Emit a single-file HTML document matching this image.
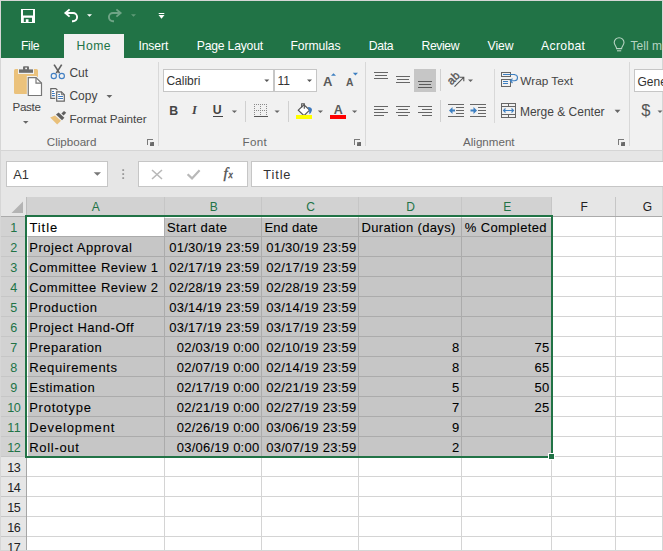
<!DOCTYPE html>
<html><head><meta charset="utf-8"><style>
html,body{margin:0;padding:0;}
body{width:663px;height:551px;position:relative;overflow:hidden;background:#fff;font-family:"Liberation Sans",sans-serif;}
svg{position:absolute;left:0;top:0;}
.t{position:absolute;white-space:pre;line-height:40px;height:40px;}
</style></head><body>
<svg width="663" height="551" viewBox="0 0 663 551">
<rect x="0" y="0" width="663" height="551" fill="#d6d6d6" />
<rect x="1" y="1" width="661" height="549" fill="#ffffff" />
<rect x="1" y="1" width="661" height="57" fill="#217346" />
<rect x="1" y="58" width="661" height="92" fill="#f1f1f1" />
<rect x="1" y="150" width="661" height="1" fill="#d5d5d5" />
<rect x="64" y="34" width="60" height="24" fill="#f1f1f1" />
<rect x="1" y="151" width="661" height="46" fill="#e6e6e6" />
<path fill="#fff" fill-rule="evenodd" d="M21 9 H35 V23 H21 Z M23 10 V15.6 H33 V10 Z M23.8 17.8 V22 H25.8 V19.2 H28.5 V22 H32 V17.8 Z"/>
<path d="M69.6 9.4 L65.4 13 L69.6 16.6 M65.5 13 H73 A4.1 4.1 0 0 1 73 21.2 H72" fill="none" stroke="#fff" stroke-width="1.9"/>
<path d="M87 14.2 H92 L89.5 16.8 Z" fill="#fff"/>
<path d="M116.4 9.4 L120.6 13 L116.4 16.6 M120.5 13 H113 A4.1 4.1 0 0 0 113 21.2 H114" fill="none" stroke="#6fa486" stroke-width="1.9"/>
<path d="M131 14.2 H136 L133.5 16.8 Z" fill="#5e9a77"/>
<rect x="158.7" y="13" width="5.6" height="1" fill="#fff"/><path d="M158.5 15 H164.5 L161.5 18.7 Z" fill="#fff"/>
<text x="20.90" y="50.30" font-family="Liberation Sans" font-size="12.2" font-weight="normal" fill="#fff" text-anchor="start" textLength="18.70" lengthAdjust="spacing">File</text>
<text x="76.60" y="50.30" font-family="Liberation Sans" font-size="12.2" font-weight="normal" fill="#217346" text-anchor="start" textLength="34.00" lengthAdjust="spacing">Home</text>
<text x="138.40" y="50.30" font-family="Liberation Sans" font-size="12.2" font-weight="normal" fill="#fff" text-anchor="start" textLength="29.90" lengthAdjust="spacing">Insert</text>
<text x="196.80" y="50.30" font-family="Liberation Sans" font-size="12.2" font-weight="normal" fill="#fff" text-anchor="start" textLength="66.30" lengthAdjust="spacing">Page Layout</text>
<text x="290.50" y="50.30" font-family="Liberation Sans" font-size="12.2" font-weight="normal" fill="#fff" text-anchor="start" textLength="50.10" lengthAdjust="spacing">Formulas</text>
<text x="368.70" y="50.30" font-family="Liberation Sans" font-size="12.2" font-weight="normal" fill="#fff" text-anchor="start" textLength="24.80" lengthAdjust="spacing">Data</text>
<text x="421.60" y="50.30" font-family="Liberation Sans" font-size="12.2" font-weight="normal" fill="#fff" text-anchor="start" textLength="37.90" lengthAdjust="spacing">Review</text>
<text x="487.60" y="50.30" font-family="Liberation Sans" font-size="12.2" font-weight="normal" fill="#fff" text-anchor="start" textLength="26.00" lengthAdjust="spacing">View</text>
<text x="541.10" y="50.30" font-family="Liberation Sans" font-size="12.2" font-weight="normal" fill="#fff" text-anchor="start" textLength="43.90" lengthAdjust="spacing">Acrobat</text>
<g fill="none" stroke="#b7d3c2" stroke-width="1.1"><path d="M616.6 48.6 C616.6 46.4 614.2 45 614.2 42.6 A4.9 4.9 0 0 1 624 42.6 C624 45 621.6 46.4 621.6 48.6 Z"/><path d="M617 50.8 H621.2"/></g>
<rect x="14" y="69" width="24" height="25" rx="1.5" fill="#ebc27c"/>
<rect x="18" y="68.4" width="16" height="5.6" fill="#f1f1f1"/>
<rect x="19" y="69.4" width="14" height="3.4" fill="#6d6d6d"/><rect x="23" y="66.2" width="6" height="4" rx="1" fill="#6d6d6d"/><rect x="25.3" y="67.6" width="1.6" height="1.6" fill="#fff"/>
<path d="M26.8 76.1 H36.5 L43 82.6 V97 H26.8 Z" fill="#f1f1f1"/>
<path d="M28.3 77.6 H36 L41.5 83.1 V95.5 H28.3 Z" fill="#fff" stroke="#777" stroke-width="1.2"/>
<path d="M36 77.6 V83.1 H41.5" fill="none" stroke="#777" stroke-width="1.2"/>
<path d="M23 121 H28.5 L25.75 123.8 Z" fill="#666"/>
<path d="M53.4 65 L54.8 64.2 L60.2 72.8 L58.8 73.6 Z" fill="#606060"/><path d="M62.4 65 L61 64.2 L55.6 72.8 L57 73.6 Z" fill="#606060"/>
<g fill="none" stroke="#4280c4" stroke-width="1.15"><circle cx="53.8" cy="76" r="2.6"/><circle cx="61.8" cy="76" r="2.6"/></g>
<path d="M50.8 88.6 H55.8 L57.2 90 V98.4 H50.8 Z" fill="#fff" stroke="#666" stroke-width="1.2"/>
<path d="M52 91.5 H54 M52 93.5 H54.8 M52 95.6 H54.8" stroke="#3d78bd" stroke-width="1.1"/>
<path d="M56.7 91.8 H61.4 L64.3 94.7 V101.1 H56.7 Z" fill="#fff" stroke="#f1f1f1" stroke-width="3"/>
<path d="M56.7 91.8 H61.4 L64.3 94.7 V101.1 H56.7 Z" fill="#fff" stroke="#666" stroke-width="1.2"/>
<path d="M61.4 91.8 V94.7 H64.3" fill="none" stroke="#666" stroke-width="0.9"/>
<path d="M58.2 94.5 H59.9 M58.2 96.5 H63 M58.2 98.5 H63" stroke="#3d78bd" stroke-width="1.1"/>
<path d="M106.5 95 H112.3 L109.4 97.9 Z" fill="#666"/>
<path d="M50.2 117.4 L55 115.4 L61 120.8 L57.2 124.6 Z" fill="#e9c07a"/>
<path d="M56 114.6 L58.6 112.4 L64.4 117.8 L62 120.2 Z" fill="#5f5f5f"/>
<path d="M61.4 113.6 L64 111 L66.2 112.8 L63.6 115.6 Z" fill="#5f5f5f"/>
<rect x="147" y="139" width="1" height="6" fill="#7a7a7a" />
<rect x="147" y="139" width="6" height="1" fill="#7a7a7a" />
<path d="M151.6 142 H154 V146 H150 V143.6 Z" fill="#6a6a6a"/>
<rect x="150" y="142" width="1" height="1" fill="#8a8a8a" />
<rect x="158" y="62" width="1" height="84" fill="#d8d8d8" />
<rect x="163" y="69" width="111" height="23" fill="#c6c6c6" />
<rect x="164" y="70" width="109" height="21" fill="#fff" />
<rect x="274" y="69" width="43" height="23" fill="#c6c6c6" />
<rect x="275" y="70" width="41" height="21" fill="#fff" />
<path d="M264.3 79.5 H269.3 L266.8 82 Z" fill="#555"/>
<path d="M307 79.5 H312 L309.5 82 Z" fill="#555"/>
<text x="323" y="85.5" font-family="Liberation Sans" font-weight="bold" font-size="13" fill="#5a5a5a">A</text>
<path d="M331 75.7 L333.5 73.2 L336 75.7 Z" fill="#3d7fc1"/>
<text x="346" y="85.5" font-family="Liberation Sans" font-weight="bold" font-size="10.3" fill="#5a5a5a">A</text>
<path d="M352.8 72.8 L358 72.8 L355.4 75.6 Z" fill="#3d7fc1"/>
<rect x="213" y="116" width="10" height="1" fill="#444" />
<path d="M231.8 110.5 H237 L234.4 113.1 Z" fill="#666"/>
<rect x="245" y="101" width="1" height="21" fill="#d0d0d0" />
<g fill="none" stroke="#8a8a8a" stroke-width="1" stroke-dasharray="1 1"><path d="M254 104.5 H267 M254.5 104 V116 M266.5 104 V116 M260.5 104 V116 M254 110.5 H267"/></g>
<rect x="254" y="116" width="14" height="1" fill="#555" />
<path d="M274.5 110.5 H279.7 L277.1 113.1 Z" fill="#666"/>
<rect x="288" y="101" width="1" height="21" fill="#d0d0d0" />
<path d="M298.3 110.2 L303.9 104.8 L309.6 110.1 L304 115.6 Z" fill="#fff" stroke="#555" stroke-width="1.15"/>
<path d="M301.7 107.4 V103.7 H304.3 V108.8" fill="none" stroke="#555" stroke-width="1.15"/>
<path d="M307.8 107 Q312.6 107.4 311.9 110.6 Q311.2 113.2 309.4 114.3 Q309.8 110.2 307.8 107 Z" fill="#3d78bd"/>
<rect x="296" y="115" width="16" height="4" fill="#ffff00" />
<path d="M317.8 110.5 H323 L320.4 113.1 Z" fill="#666"/>
<text x="333.8" y="114.3" font-family="Liberation Sans" font-weight="bold" font-size="12.5" fill="#5a5a5a">A</text>
<rect x="330" y="115" width="16" height="4" fill="#ff0000" />
<path d="M352 110.5 H357.2 L354.6 113.1 Z" fill="#666"/>
<rect x="354" y="139" width="1" height="6" fill="#7a7a7a" />
<rect x="354" y="139" width="6" height="1" fill="#7a7a7a" />
<path d="M358.6 142 H361 V146 H357 V143.6 Z" fill="#6a6a6a"/>
<rect x="357" y="142" width="1" height="1" fill="#8a8a8a" />
<rect x="365" y="62" width="1" height="84" fill="#d8d8d8" />
<rect x="374" y="72" width="14" height="1" fill="#666" />
<rect x="374" y="78" width="14" height="1" fill="#666" />
<rect x="375" y="75" width="12" height="1" fill="#666" />
<rect x="396" y="76" width="14" height="1" fill="#666" />
<rect x="396" y="82" width="14" height="1" fill="#666" />
<rect x="397" y="79" width="12" height="1" fill="#666" />
<rect x="414" y="69" width="22" height="23" fill="#c6c6c6" />
<rect x="418" y="81" width="14" height="1" fill="#5a5a5a" />
<rect x="418" y="87" width="14" height="1" fill="#5a5a5a" />
<rect x="419" y="84" width="12" height="1" fill="#5a5a5a" />
<rect x="440" y="69" width="1" height="22" fill="#d0d0d0" />
<g transform="translate(453.4,77.6) rotate(-45)"><text x="-6.8" y="4.2" font-family="Liberation Sans" font-size="11.5" fill="#555" stroke="#555" stroke-width="0.35">ab</text></g>
<path d="M454.5 86.6 L463.5 77.6 M459.8 77.3 H463.8 V81.3" fill="none" stroke="#555" stroke-width="1.1"/>
<path d="M468 79.5 H473 L470.5 82 Z" fill="#666"/>
<rect x="374" y="106" width="14" height="1" fill="#666" />
<rect x="396" y="106" width="14" height="1" fill="#666" />
<rect x="418" y="106" width="14" height="1" fill="#666" />
<rect x="374" y="109" width="10" height="1" fill="#666" />
<rect x="398" y="109" width="10" height="1" fill="#666" />
<rect x="422" y="109" width="10" height="1" fill="#666" />
<rect x="374" y="112" width="14" height="1" fill="#666" />
<rect x="396" y="112" width="14" height="1" fill="#666" />
<rect x="418" y="112" width="14" height="1" fill="#666" />
<rect x="374" y="115" width="10" height="1" fill="#666" />
<rect x="398" y="115" width="10" height="1" fill="#666" />
<rect x="422" y="115" width="10" height="1" fill="#666" />
<rect x="440" y="100" width="1" height="22" fill="#d0d0d0" />
<rect x="448" y="104" width="16" height="1" fill="#666" />
<rect x="470" y="104" width="16" height="1" fill="#666" />
<rect x="456" y="107" width="8" height="1" fill="#666" />
<rect x="478" y="107" width="8" height="1" fill="#666" />
<rect x="456" y="110" width="8" height="1" fill="#666" />
<rect x="478" y="110" width="8" height="1" fill="#666" />
<rect x="456" y="113" width="8" height="1" fill="#666" />
<rect x="478" y="113" width="8" height="1" fill="#666" />
<rect x="448" y="116" width="16" height="1" fill="#666" />
<rect x="470" y="116" width="16" height="1" fill="#666" />
<path d="M449 110.5 L452.5 107 V109.5 H455 V111.5 H452.5 V114 Z" fill="#3d7fc1"/>
<path d="M477 110.5 L473.5 107 V109.5 H470.5 V111.5 H473.5 V114 Z" fill="#3d7fc1"/>
<rect x="494" y="69" width="1" height="54" fill="#d8d8d8" />
<g fill="none" stroke="#666" stroke-width="1"><rect x="501.5" y="72.5" width="9" height="4"/><rect x="501.5" y="79.5" width="9" height="7"/></g>
<path d="M503 74.5 H515 M503 81.5 H508 M503 83.5 H508" stroke="#3d7fc1" stroke-width="1"/>
<path d="M514.5 74.8 A3 3 0 0 1 514.5 80.8 H510.5 M512.5 78.6 L510.3 80.8 L512.5 83" fill="none" stroke="#3d7fc1" stroke-width="1.1"/>
<g fill="none" stroke="#666" stroke-width="1"><rect x="501.5" y="103.5" width="14" height="14"/><path d="M501.5 106.5 H515.5 M501.5 114.5 H515.5 M508.5 103.5 V106.5 M508.5 114.5 V117.5"/></g>
<path d="M503.5 110.5 H513.5 M505.5 108.5 L503.5 110.5 L505.5 112.5 M511.5 108.5 L513.5 110.5 L511.5 112.5" fill="none" stroke="#3d7fc1" stroke-width="1.1"/>
<path d="M614.6 109.8 H620.4 L617.5 112.9 Z" fill="#666"/>
<rect x="618" y="139" width="1" height="6" fill="#7a7a7a" />
<rect x="618" y="139" width="6" height="1" fill="#7a7a7a" />
<path d="M622.6 142 H625 V146 H621 V143.6 Z" fill="#6a6a6a"/>
<rect x="621" y="142" width="1" height="1" fill="#8a8a8a" />
<rect x="629" y="62" width="1" height="84" fill="#d8d8d8" />
<rect x="634" y="69" width="47" height="23" fill="#c6c6c6" />
<rect x="635" y="70" width="45" height="21" fill="#fff" />
<path d="M657.5 110.5 H662.5 L660 113.1 Z" fill="#666"/>
<rect x="6" y="161" width="102" height="26" fill="#c6c6c6" />
<rect x="7" y="162" width="100" height="24" fill="#fff" />
<path d="M93.7 172.2 H101 L97.35 175.7 Z" fill="#777"/>
<rect x="122.3" y="169.2" width="1.8" height="1.8" fill="#999" />
<rect x="122.3" y="173.2" width="1.8" height="1.8" fill="#999" />
<rect x="122.3" y="177.2" width="1.8" height="1.8" fill="#999" />
<rect x="138" y="161" width="110" height="26" fill="#c6c6c6" />
<rect x="139" y="162" width="108" height="24" fill="#fff" />
<path d="M152 170 L162 179 M162 170 L152 179" stroke="#b8b8b8" stroke-width="1.6"/>
<path d="M187.6 174.2 L192 178.4 L199.6 170.2" fill="none" stroke="#b8b8b8" stroke-width="2.2"/>
<text x="223.60" y="177.80" font-family="Liberation Serif" font-size="15" font-weight="normal" font-style="italic" fill="#505050" text-anchor="start" stroke="#505050" stroke-width="0.35">f</text>
<text x="228.60" y="177.80" font-family="Liberation Serif" font-size="9.5" font-weight="normal" font-style="italic" fill="#505050" text-anchor="start" stroke="#505050" stroke-width="0.35">x</text>
<rect x="251" y="161" width="450" height="26" fill="#c6c6c6" />
<rect x="252" y="162" width="448" height="24" fill="#fff" />
<rect x="1" y="197" width="661" height="19" fill="#e6e6e6" />
<rect x="27" y="197" width="524" height="19" fill="#d2d2d2" />
<rect x="1" y="216" width="25" height="334" fill="#e6e6e6" />
<rect x="1" y="217" width="25" height="240" fill="#d2d2d2" />
<path d="M11.5 213 H23 V201.5 Z" fill="#b4b4b4"/>
<rect x="26" y="197" width="1" height="19" fill="#bdbdbd" />
<rect x="164" y="197" width="1" height="19" fill="#c6c6c6" />
<rect x="261" y="197" width="1" height="19" fill="#c6c6c6" />
<rect x="358" y="197" width="1" height="19" fill="#c6c6c6" />
<rect x="461" y="197" width="1" height="19" fill="#c6c6c6" />
<rect x="551" y="197" width="1" height="19" fill="#c6c6c6" />
<rect x="615" y="197" width="1" height="19" fill="#c6c6c6" />
<rect x="1" y="216" width="661" height="1" fill="#ababab" />
<rect x="1" y="236" width="25" height="1" fill="#c6c6c6" />
<rect x="1" y="256" width="25" height="1" fill="#c6c6c6" />
<rect x="1" y="276" width="25" height="1" fill="#c6c6c6" />
<rect x="1" y="296" width="25" height="1" fill="#c6c6c6" />
<rect x="1" y="316" width="25" height="1" fill="#c6c6c6" />
<rect x="1" y="336" width="25" height="1" fill="#c6c6c6" />
<rect x="1" y="356" width="25" height="1" fill="#c6c6c6" />
<rect x="1" y="376" width="25" height="1" fill="#c6c6c6" />
<rect x="1" y="396" width="25" height="1" fill="#c6c6c6" />
<rect x="1" y="416" width="25" height="1" fill="#c6c6c6" />
<rect x="1" y="436" width="25" height="1" fill="#c6c6c6" />
<rect x="1" y="456" width="25" height="1" fill="#c6c6c6" />
<rect x="1" y="476" width="25" height="1" fill="#c6c6c6" />
<rect x="1" y="496" width="25" height="1" fill="#c6c6c6" />
<rect x="1" y="516" width="25" height="1" fill="#c6c6c6" />
<rect x="1" y="536" width="25" height="1" fill="#c6c6c6" />
<rect x="1" y="556" width="25" height="1" fill="#c6c6c6" />
<rect x="26" y="457" width="1" height="93" fill="#a6a6a6" />
<rect x="164" y="217" width="1" height="333" fill="#d4d4d4" />
<rect x="261" y="217" width="1" height="333" fill="#d4d4d4" />
<rect x="358" y="217" width="1" height="333" fill="#d4d4d4" />
<rect x="461" y="217" width="1" height="333" fill="#d4d4d4" />
<rect x="551" y="217" width="1" height="333" fill="#d4d4d4" />
<rect x="615" y="217" width="1" height="333" fill="#d4d4d4" />
<rect x="27" y="236" width="635" height="1" fill="#d4d4d4" />
<rect x="27" y="256" width="635" height="1" fill="#d4d4d4" />
<rect x="27" y="276" width="635" height="1" fill="#d4d4d4" />
<rect x="27" y="296" width="635" height="1" fill="#d4d4d4" />
<rect x="27" y="316" width="635" height="1" fill="#d4d4d4" />
<rect x="27" y="336" width="635" height="1" fill="#d4d4d4" />
<rect x="27" y="356" width="635" height="1" fill="#d4d4d4" />
<rect x="27" y="376" width="635" height="1" fill="#d4d4d4" />
<rect x="27" y="396" width="635" height="1" fill="#d4d4d4" />
<rect x="27" y="416" width="635" height="1" fill="#d4d4d4" />
<rect x="27" y="436" width="635" height="1" fill="#d4d4d4" />
<rect x="27" y="456" width="635" height="1" fill="#d4d4d4" />
<rect x="27" y="476" width="635" height="1" fill="#d4d4d4" />
<rect x="27" y="496" width="635" height="1" fill="#d4d4d4" />
<rect x="27" y="516" width="635" height="1" fill="#d4d4d4" />
<rect x="27" y="536" width="635" height="1" fill="#d4d4d4" />
<rect x="27" y="556" width="635" height="1" fill="#d4d4d4" />
<rect x="28" y="218" width="523" height="238" fill="#c6c6c6" />
<rect x="27" y="217" width="137" height="19" fill="#ffffff" />
<rect x="164" y="218" width="1" height="238" fill="#ababab" />
<rect x="261" y="218" width="1" height="238" fill="#ababab" />
<rect x="358" y="218" width="1" height="238" fill="#ababab" />
<rect x="461" y="218" width="1" height="238" fill="#ababab" />
<rect x="28" y="236" width="523" height="1" fill="#ababab" />
<rect x="28" y="256" width="523" height="1" fill="#ababab" />
<rect x="28" y="276" width="523" height="1" fill="#ababab" />
<rect x="28" y="296" width="523" height="1" fill="#ababab" />
<rect x="28" y="316" width="523" height="1" fill="#ababab" />
<rect x="28" y="336" width="523" height="1" fill="#ababab" />
<rect x="28" y="356" width="523" height="1" fill="#ababab" />
<rect x="28" y="376" width="523" height="1" fill="#ababab" />
<rect x="28" y="396" width="523" height="1" fill="#ababab" />
<rect x="28" y="416" width="523" height="1" fill="#ababab" />
<rect x="28" y="436" width="523" height="1" fill="#ababab" />
<path d="M25 215 H553 V458 H25 Z M27 217 V456 H551 V217 Z" fill="#217346" fill-rule="evenodd"/>
<rect x="548" y="453" width="7" height="7" fill="#fff" />
<rect x="549" y="454" width="5" height="5" fill="#217346" />
<text x="13.70" y="231.80" font-family="Liberation Sans" font-size="12.6" font-weight="normal" fill="#217346" text-anchor="middle">1</text>
<text x="13.70" y="251.80" font-family="Liberation Sans" font-size="12.6" font-weight="normal" fill="#217346" text-anchor="middle">2</text>
<text x="13.70" y="271.80" font-family="Liberation Sans" font-size="12.6" font-weight="normal" fill="#217346" text-anchor="middle">3</text>
<text x="13.70" y="291.80" font-family="Liberation Sans" font-size="12.6" font-weight="normal" fill="#217346" text-anchor="middle">4</text>
<text x="13.70" y="311.80" font-family="Liberation Sans" font-size="12.6" font-weight="normal" fill="#217346" text-anchor="middle">5</text>
<text x="13.70" y="331.80" font-family="Liberation Sans" font-size="12.6" font-weight="normal" fill="#217346" text-anchor="middle">6</text>
<text x="13.70" y="351.80" font-family="Liberation Sans" font-size="12.6" font-weight="normal" fill="#217346" text-anchor="middle">7</text>
<text x="13.70" y="371.80" font-family="Liberation Sans" font-size="12.6" font-weight="normal" fill="#217346" text-anchor="middle">8</text>
<text x="13.70" y="391.80" font-family="Liberation Sans" font-size="12.6" font-weight="normal" fill="#217346" text-anchor="middle">9</text>
<text x="14.00" y="411.80" font-family="Liberation Sans" font-size="12.6" font-weight="normal" fill="#217346" text-anchor="middle" textLength="13.40" lengthAdjust="spacing">10</text>
<text x="14.00" y="431.80" font-family="Liberation Sans" font-size="12.6" font-weight="normal" fill="#217346" text-anchor="middle" textLength="13.40" lengthAdjust="spacing">11</text>
<text x="14.00" y="451.80" font-family="Liberation Sans" font-size="12.6" font-weight="normal" fill="#217346" text-anchor="middle" textLength="13.40" lengthAdjust="spacing">12</text>
<text x="14.00" y="471.80" font-family="Liberation Sans" font-size="12.6" font-weight="normal" fill="#222" text-anchor="middle" textLength="13.40" lengthAdjust="spacing">13</text>
<text x="14.00" y="491.80" font-family="Liberation Sans" font-size="12.6" font-weight="normal" fill="#222" text-anchor="middle" textLength="13.40" lengthAdjust="spacing">14</text>
<text x="14.00" y="511.80" font-family="Liberation Sans" font-size="12.6" font-weight="normal" fill="#222" text-anchor="middle" textLength="13.40" lengthAdjust="spacing">15</text>
<text x="14.00" y="531.80" font-family="Liberation Sans" font-size="12.6" font-weight="normal" fill="#222" text-anchor="middle" textLength="13.40" lengthAdjust="spacing">16</text>
<text x="14.00" y="551.80" font-family="Liberation Sans" font-size="12.6" font-weight="normal" fill="#222" text-anchor="middle" textLength="13.40" lengthAdjust="spacing">17</text>
<text x="29.40" y="231.60" font-family="Liberation Sans" font-size="13" font-weight="normal" fill="#000" text-anchor="start" textLength="27.80" lengthAdjust="spacing" stroke="#000" stroke-width="0.08">Title</text>
<text x="167.00" y="231.60" font-family="Liberation Sans" font-size="13" font-weight="normal" fill="#000" text-anchor="start" textLength="59.90" lengthAdjust="spacing" stroke="#000" stroke-width="0.08">Start date</text>
<text x="264.40" y="231.60" font-family="Liberation Sans" font-size="13" font-weight="normal" fill="#000" text-anchor="start" textLength="53.40" lengthAdjust="spacing" stroke="#000" stroke-width="0.08">End date</text>
<text x="361.50" y="231.60" font-family="Liberation Sans" font-size="13" font-weight="normal" fill="#000" text-anchor="start" textLength="93.90" lengthAdjust="spacing" stroke="#000" stroke-width="0.08">Duration (days)</text>
<text x="464.70" y="231.60" font-family="Liberation Sans" font-size="13" font-weight="normal" fill="#000" text-anchor="start" textLength="81.90" lengthAdjust="spacing" stroke="#000" stroke-width="0.08">% Completed</text>
<text x="29.20" y="251.60" font-family="Liberation Sans" font-size="13" font-weight="normal" fill="#000" text-anchor="start" textLength="102.60" lengthAdjust="spacing" stroke="#000" stroke-width="0.08">Project Approval</text>
<text x="259.20" y="251.60" font-family="Liberation Sans" font-size="13" font-weight="normal" fill="#000" text-anchor="end" textLength="89.90" lengthAdjust="spacing" stroke="#000" stroke-width="0.08">01/30/19 23:59</text>
<text x="356.20" y="251.60" font-family="Liberation Sans" font-size="13" font-weight="normal" fill="#000" text-anchor="end" textLength="89.90" lengthAdjust="spacing" stroke="#000" stroke-width="0.08">01/30/19 23:59</text>
<text x="29.20" y="271.60" font-family="Liberation Sans" font-size="13" font-weight="normal" fill="#000" text-anchor="start" textLength="128.90" lengthAdjust="spacing" stroke="#000" stroke-width="0.08">Committee Review 1</text>
<text x="259.20" y="271.60" font-family="Liberation Sans" font-size="13" font-weight="normal" fill="#000" text-anchor="end" textLength="89.90" lengthAdjust="spacing" stroke="#000" stroke-width="0.08">02/17/19 23:59</text>
<text x="356.20" y="271.60" font-family="Liberation Sans" font-size="13" font-weight="normal" fill="#000" text-anchor="end" textLength="89.90" lengthAdjust="spacing" stroke="#000" stroke-width="0.08">02/17/19 23:59</text>
<text x="29.20" y="291.60" font-family="Liberation Sans" font-size="13" font-weight="normal" fill="#000" text-anchor="start" textLength="128.90" lengthAdjust="spacing" stroke="#000" stroke-width="0.08">Committee Review 2</text>
<text x="259.20" y="291.60" font-family="Liberation Sans" font-size="13" font-weight="normal" fill="#000" text-anchor="end" textLength="89.90" lengthAdjust="spacing" stroke="#000" stroke-width="0.08">02/28/19 23:59</text>
<text x="356.20" y="291.60" font-family="Liberation Sans" font-size="13" font-weight="normal" fill="#000" text-anchor="end" textLength="89.90" lengthAdjust="spacing" stroke="#000" stroke-width="0.08">02/28/19 23:59</text>
<text x="29.20" y="311.60" font-family="Liberation Sans" font-size="13" font-weight="normal" fill="#000" text-anchor="start" textLength="67.80" lengthAdjust="spacing" stroke="#000" stroke-width="0.08">Production</text>
<text x="259.20" y="311.60" font-family="Liberation Sans" font-size="13" font-weight="normal" fill="#000" text-anchor="end" textLength="89.90" lengthAdjust="spacing" stroke="#000" stroke-width="0.08">03/14/19 23:59</text>
<text x="356.20" y="311.60" font-family="Liberation Sans" font-size="13" font-weight="normal" fill="#000" text-anchor="end" textLength="89.90" lengthAdjust="spacing" stroke="#000" stroke-width="0.08">03/14/19 23:59</text>
<text x="29.20" y="331.60" font-family="Liberation Sans" font-size="13" font-weight="normal" fill="#000" text-anchor="start" textLength="104.40" lengthAdjust="spacing" stroke="#000" stroke-width="0.08">Project Hand-Off</text>
<text x="259.20" y="331.60" font-family="Liberation Sans" font-size="13" font-weight="normal" fill="#000" text-anchor="end" textLength="89.90" lengthAdjust="spacing" stroke="#000" stroke-width="0.08">03/17/19 23:59</text>
<text x="356.20" y="331.60" font-family="Liberation Sans" font-size="13" font-weight="normal" fill="#000" text-anchor="end" textLength="89.90" lengthAdjust="spacing" stroke="#000" stroke-width="0.08">03/17/19 23:59</text>
<text x="29.20" y="351.60" font-family="Liberation Sans" font-size="13" font-weight="normal" fill="#000" text-anchor="start" textLength="72.60" lengthAdjust="spacing" stroke="#000" stroke-width="0.08">Preparation</text>
<text x="259.20" y="351.60" font-family="Liberation Sans" font-size="13" font-weight="normal" fill="#000" text-anchor="end" textLength="82.50" lengthAdjust="spacing" stroke="#000" stroke-width="0.08">02/03/19 0:00</text>
<text x="356.20" y="351.60" font-family="Liberation Sans" font-size="13" font-weight="normal" fill="#000" text-anchor="end" textLength="89.90" lengthAdjust="spacing" stroke="#000" stroke-width="0.08">02/10/19 23:59</text>
<text x="459.20" y="351.60" font-family="Liberation Sans" font-size="13" font-weight="normal" fill="#000" text-anchor="end" textLength="8.80" lengthAdjust="spacing" stroke="#000" stroke-width="0.08">8</text>
<text x="549.20" y="351.60" font-family="Liberation Sans" font-size="13" font-weight="normal" fill="#000" text-anchor="end" textLength="14.80" lengthAdjust="spacing" stroke="#000" stroke-width="0.08">75</text>
<text x="29.20" y="371.60" font-family="Liberation Sans" font-size="13" font-weight="normal" fill="#000" text-anchor="start" textLength="87.80" lengthAdjust="spacing" stroke="#000" stroke-width="0.08">Requirements</text>
<text x="259.20" y="371.60" font-family="Liberation Sans" font-size="13" font-weight="normal" fill="#000" text-anchor="end" textLength="82.50" lengthAdjust="spacing" stroke="#000" stroke-width="0.08">02/07/19 0:00</text>
<text x="356.20" y="371.60" font-family="Liberation Sans" font-size="13" font-weight="normal" fill="#000" text-anchor="end" textLength="89.90" lengthAdjust="spacing" stroke="#000" stroke-width="0.08">02/14/19 23:59</text>
<text x="459.20" y="371.60" font-family="Liberation Sans" font-size="13" font-weight="normal" fill="#000" text-anchor="end" textLength="8.80" lengthAdjust="spacing" stroke="#000" stroke-width="0.08">8</text>
<text x="549.20" y="371.60" font-family="Liberation Sans" font-size="13" font-weight="normal" fill="#000" text-anchor="end" textLength="14.80" lengthAdjust="spacing" stroke="#000" stroke-width="0.08">65</text>
<text x="29.20" y="391.60" font-family="Liberation Sans" font-size="13" font-weight="normal" fill="#000" text-anchor="start" textLength="65.60" lengthAdjust="spacing" stroke="#000" stroke-width="0.08">Estimation</text>
<text x="259.20" y="391.60" font-family="Liberation Sans" font-size="13" font-weight="normal" fill="#000" text-anchor="end" textLength="82.50" lengthAdjust="spacing" stroke="#000" stroke-width="0.08">02/17/19 0:00</text>
<text x="356.20" y="391.60" font-family="Liberation Sans" font-size="13" font-weight="normal" fill="#000" text-anchor="end" textLength="89.90" lengthAdjust="spacing" stroke="#000" stroke-width="0.08">02/21/19 23:59</text>
<text x="459.20" y="391.60" font-family="Liberation Sans" font-size="13" font-weight="normal" fill="#000" text-anchor="end" textLength="8.80" lengthAdjust="spacing" stroke="#000" stroke-width="0.08">5</text>
<text x="549.20" y="391.60" font-family="Liberation Sans" font-size="13" font-weight="normal" fill="#000" text-anchor="end" textLength="14.80" lengthAdjust="spacing" stroke="#000" stroke-width="0.08">50</text>
<text x="29.20" y="411.60" font-family="Liberation Sans" font-size="13" font-weight="normal" fill="#000" text-anchor="start" textLength="61.70" lengthAdjust="spacing" stroke="#000" stroke-width="0.08">Prototype</text>
<text x="259.20" y="411.60" font-family="Liberation Sans" font-size="13" font-weight="normal" fill="#000" text-anchor="end" textLength="82.50" lengthAdjust="spacing" stroke="#000" stroke-width="0.08">02/21/19 0:00</text>
<text x="356.20" y="411.60" font-family="Liberation Sans" font-size="13" font-weight="normal" fill="#000" text-anchor="end" textLength="89.90" lengthAdjust="spacing" stroke="#000" stroke-width="0.08">02/27/19 23:59</text>
<text x="459.20" y="411.60" font-family="Liberation Sans" font-size="13" font-weight="normal" fill="#000" text-anchor="end" textLength="8.80" lengthAdjust="spacing" stroke="#000" stroke-width="0.08">7</text>
<text x="549.20" y="411.60" font-family="Liberation Sans" font-size="13" font-weight="normal" fill="#000" text-anchor="end" textLength="14.80" lengthAdjust="spacing" stroke="#000" stroke-width="0.08">25</text>
<text x="29.20" y="431.60" font-family="Liberation Sans" font-size="13" font-weight="normal" fill="#000" text-anchor="start" textLength="85.20" lengthAdjust="spacing" stroke="#000" stroke-width="0.08">Development</text>
<text x="259.20" y="431.60" font-family="Liberation Sans" font-size="13" font-weight="normal" fill="#000" text-anchor="end" textLength="82.50" lengthAdjust="spacing" stroke="#000" stroke-width="0.08">02/26/19 0:00</text>
<text x="356.20" y="431.60" font-family="Liberation Sans" font-size="13" font-weight="normal" fill="#000" text-anchor="end" textLength="89.90" lengthAdjust="spacing" stroke="#000" stroke-width="0.08">03/06/19 23:59</text>
<text x="459.20" y="431.60" font-family="Liberation Sans" font-size="13" font-weight="normal" fill="#000" text-anchor="end" textLength="8.80" lengthAdjust="spacing" stroke="#000" stroke-width="0.08">9</text>
<text x="29.20" y="451.60" font-family="Liberation Sans" font-size="13" font-weight="normal" fill="#000" text-anchor="start" textLength="49.70" lengthAdjust="spacing" stroke="#000" stroke-width="0.08">Roll-out</text>
<text x="259.20" y="451.60" font-family="Liberation Sans" font-size="13" font-weight="normal" fill="#000" text-anchor="end" textLength="82.50" lengthAdjust="spacing" stroke="#000" stroke-width="0.08">03/06/19 0:00</text>
<text x="356.20" y="451.60" font-family="Liberation Sans" font-size="13" font-weight="normal" fill="#000" text-anchor="end" textLength="89.90" lengthAdjust="spacing" stroke="#000" stroke-width="0.08">03/07/19 23:59</text>
<text x="459.20" y="451.60" font-family="Liberation Sans" font-size="13" font-weight="normal" fill="#000" text-anchor="end" textLength="8.80" lengthAdjust="spacing" stroke="#000" stroke-width="0.08">2</text>
</svg>
<div class="t" style="top:26.14px;font-size:12px;color:#b7d3c2;font-family:'Liberation Sans',sans-serif;left:630.6px;">Tell me</div>
<div class="t" style="top:86.78px;font-size:11.6px;color:#444;font-family:'Liberation Sans',sans-serif;letter-spacing:-0.3px;left:12.5px;">Paste</div>
<div class="t" style="top:52.84px;font-size:12px;color:#444;font-family:'Liberation Sans',sans-serif;left:69.4px;">Cut</div>
<div class="t" style="top:75.84px;font-size:12px;color:#444;font-family:'Liberation Sans',sans-serif;left:69.4px;">Copy</div>
<div class="t" style="top:98.95px;font-size:11.7px;color:#444;font-family:'Liberation Sans',sans-serif;left:69.4px;">Format Painter</div>
<div class="t" style="top:122.28px;font-size:11.6px;color:#666;font-family:'Liberation Sans',sans-serif;left:46.8px;">Clipboard</div>
<div class="t" style="top:60.54px;font-size:12px;color:#333;font-family:'Liberation Sans',sans-serif;left:166.4px;">Calibri</div>
<div class="t" style="top:60.64px;font-size:12px;color:#333;font-family:'Liberation Sans',sans-serif;left:277.5px;">11</div>
<div class="t" style="top:90.54px;font-size:12.3px;color:#444;font-family:'Liberation Sans',sans-serif;font-weight:bold;left:169.3px;">B</div>
<div class="t" style="top:90.47px;font-size:12.5px;color:#444;font-family:'Liberation Serif',sans-serif;font-style:italic;font-weight:bold;left:192.0px;">I</div>
<div class="t" style="top:90.04px;font-size:12.3px;color:#444;font-family:'Liberation Sans',sans-serif;font-weight:bold;left:212.8px;">U</div>
<div class="t" style="top:122.28px;font-size:11.6px;color:#666;font-family:'Liberation Sans',sans-serif;letter-spacing:0.3px;left:242.6px;">Font</div>
<div class="t" style="top:60.91px;font-size:11.8px;color:#444;font-family:'Liberation Sans',sans-serif;left:520.3px;">Wrap Text</div>
<div class="t" style="top:92.34px;font-size:12px;color:#444;font-family:'Liberation Sans',sans-serif;left:519.9px;">Merge &amp; Center</div>
<div class="t" style="top:122.28px;font-size:11.6px;color:#666;font-family:'Liberation Sans',sans-serif;left:463px;">Alignment</div>
<div class="t" style="top:61.54px;font-size:12px;color:#333;font-family:'Liberation Sans',sans-serif;left:637.5px;">General</div>
<div class="t" style="top:89.88px;font-size:16.5px;color:#555;font-family:'Liberation Sans',sans-serif;letter-spacing:-0.5px;left:641.2px;">$</div>
<div class="t" style="top:155.46px;font-size:12.8px;color:#333;font-family:'Liberation Sans',sans-serif;left:13.3px;">A1</div>
<div class="t" style="top:155.26px;font-size:12.8px;color:#333;font-family:'Liberation Sans',sans-serif;letter-spacing:0.9px;left:263.2px;">Title</div>
<div class="t" style="top:186.54px;font-size:12px;color:#217346;font-family:'Liberation Sans',sans-serif;left:-204.3px;width:600px;text-align:center;">A</div>
<div class="t" style="top:186.54px;font-size:12px;color:#217346;font-family:'Liberation Sans',sans-serif;left:-86.30000000000001px;width:600px;text-align:center;">B</div>
<div class="t" style="top:186.54px;font-size:12px;color:#217346;font-family:'Liberation Sans',sans-serif;left:10.699999999999989px;width:600px;text-align:center;">C</div>
<div class="t" style="top:186.54px;font-size:12px;color:#217346;font-family:'Liberation Sans',sans-serif;left:110.69999999999999px;width:600px;text-align:center;">D</div>
<div class="t" style="top:186.54px;font-size:12px;color:#217346;font-family:'Liberation Sans',sans-serif;left:207.2px;width:600px;text-align:center;">E</div>
<div class="t" style="top:186.54px;font-size:12px;color:#222;font-family:'Liberation Sans',sans-serif;left:284.20000000000005px;width:600px;text-align:center;">F</div>
<div class="t" style="top:186.54px;font-size:12px;color:#222;font-family:'Liberation Sans',sans-serif;left:347.5px;width:600px;text-align:center;">G</div>
</body></html>
